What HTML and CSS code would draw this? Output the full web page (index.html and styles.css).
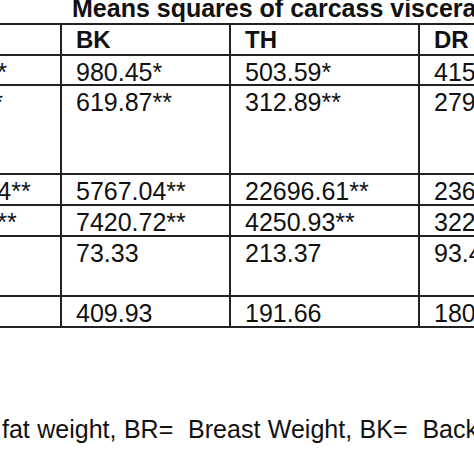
FILE: index.html
```html
<!DOCTYPE html>
<html>
<head>
<meta charset="utf-8">
<link rel="stylesheet" href="styles.css">
</head>
<body>
<div class="title">Means squares of carcass viscera</div>
<div class="table" role="table">
  <div class="cell head">BR</div><div class="cell head">BK</div><div class="cell head">TH</div><div class="cell head">DR</div>
  <div class="cell">1872.36*</div><div class="cell">980.45*</div><div class="cell">503.59*</div><div class="cell">415.92*</div>
  <div class="cell">745.18**</div><div class="cell">619.87**</div><div class="cell">312.89**</div><div class="cell">279.45**</div>
  <div class="cell">18394.24**</div><div class="cell">5767.04**</div><div class="cell">22696.61**</div><div class="cell">2360.47**</div>
  <div class="cell">3657.91**</div><div class="cell">7420.72**</div><div class="cell">4250.93**</div><div class="cell">3225.18**</div>
  <div class="cell">104.27</div><div class="cell">73.33</div><div class="cell">213.37</div><div class="cell">93.41</div>
  <div class="cell">286.50</div><div class="cell">409.93</div><div class="cell">191.66</div><div class="cell">180.72</div>
</div>
<div class="note">fat weight, BR=&nbsp; Breast Weight, BK=&nbsp; Back weight</div>
</body>
</html>
```
FILE: styles.css
```css
html, body {
  margin: 0;
  padding: 0;
  overflow: hidden;
  background: #ffffff;
}
body {
  width: 474px;
  height: 474px;
  font-family: "Liberation Sans", Arial, sans-serif;
  color: #111111;
}
.title {
  font-weight: bold;
  font-size: 25px;
  line-height: 17px;
  height: 17px;
  margin-bottom: 6px;
  padding-left: 72px;
  white-space: nowrap;
}
.table {
  display: grid;
  width: max-content;
  margin-left: -109px;
  grid-template-columns: 167px 167px 187px 200px;
  grid-template-rows: 29px 28px 87px 29px 29px 58px 29px;
  gap: 2px;
  padding: 2px;
  background: #222222;
}
.cell {
  background: #ffffff;
  font-size: 25px;
  line-height: 28px;
  padding: 2px 0 0 14px;
  white-space: nowrap;
  overflow: hidden;
}
.head {
  font-weight: bold;
  font-size: 24px;
  padding-top: 1px;
}
.note {
  margin-top: 86px;
  font-size: 25px;
  line-height: 30px;
  padding-left: 2px;
  word-spacing: 0.5px;
  white-space: nowrap;
}
```
